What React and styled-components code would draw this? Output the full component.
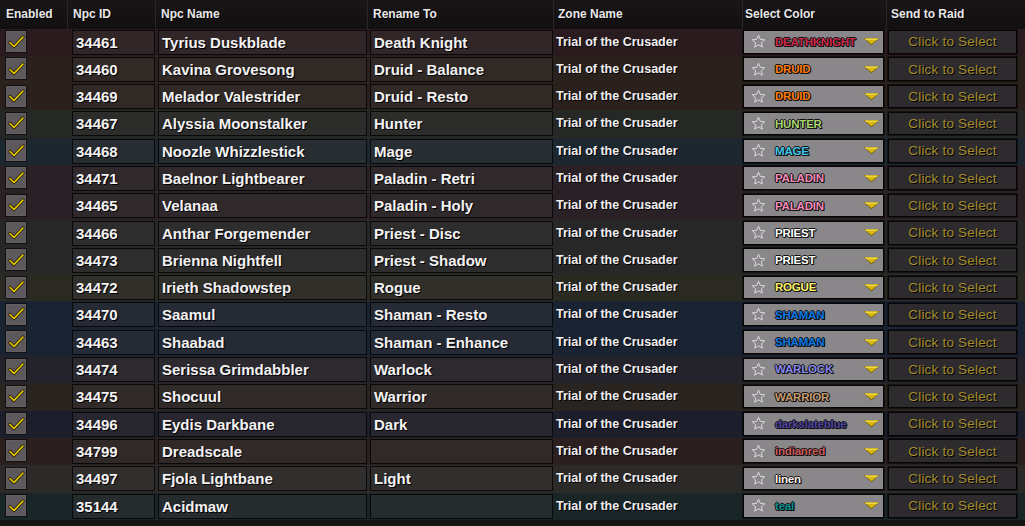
import React from "react";
import styled, { createGlobalStyle } from "styled-components";

const Global = createGlobalStyle`
  html, body { margin: 0; padding: 0; background: #161314; }
  body { font-family: "Liberation Sans", Arial, sans-serif; }
`;

const Frame = styled.div`
  width: 1025px;
  height: 526px;
  background: #161314;
  display: flex;
  flex-direction: column;
  overflow: hidden;
`;

const Header = styled.div`
  display: grid;
  grid-template-columns: 67px 88px 212px 186px 189px 144px 139px;
  height: 28.5px;
  background: linear-gradient(#1a1617, #110f10);
  flex-shrink: 0;
`;

const HeadCell = styled.div`
  display: flex;
  align-items: center;
  padding-left: ${(p) => p.$pad}px;
  border-left: ${(p) => (p.$first ? "none" : "1px solid #2a2627")};
  color: #e9e7e8;
  font-weight: 700;
  font-size: 12px;
  text-shadow: 1px 1px 0 #000;
  padding-bottom: 1px;
`;

const Body = styled.div`
  display: flex;
  flex-direction: column;
`;

const Row = styled.div`
  display: grid;
  grid-template-columns: 72px 86px 212px 183px 190px 145px 137px;
  height: 27.3px;
  background: ${(p) => p.$bg};
  align-items: start;
`;

const CheckBox = styled.div`
  margin: 1.5px 0 0 5px;
  width: 22px;
  height: 23px;
  box-sizing: border-box;
  background: #5c585b;
  border: 1px solid #121011;
  box-shadow: inset 0 0 0 1px rgba(255, 255, 255, 0.04);
  display: flex;
  align-items: center;
  justify-content: center;
`;

const Field = styled.div`
  margin-top: 1px;
  width: ${(p) => p.$w}px;
  height: 25px;
  box-sizing: border-box;
  border: 1px solid #0a0909;
  background: rgba(58, 54, 56, 0.38);
  display: flex;
  align-items: center;
  padding-left: 3px;
  color: #f4f2f3;
  font-weight: 700;
  font-size: 15px;
  text-shadow: 1px 1px 0 #000;
  white-space: nowrap;
  overflow: hidden;
`;

const Zone = styled.div`
  height: 27px;
  display: flex;
  align-items: center;
  padding-left: 3px;
  padding-bottom: 1px;
  box-sizing: border-box;
  color: #f2f0f1;
  font-weight: 700;
  font-size: 12.5px;
  text-shadow: 1px 1px 0 #000;
  white-space: nowrap;
`;

const Dropdown = styled.div`
  margin-top: 1.5px;
  width: 141px;
  height: 23.5px;
  box-sizing: border-box;
  border: 1px solid #050505;
  box-shadow: 0 0 0 0.5px #000;
  background: #8a878a;
  display: flex;
  align-items: center;
  padding-left: 7px;
  padding-right: 3px;
`;

const ColorName = styled.span`
  flex: 1;
  margin-left: 9px;
  color: ${(p) => p.$color};
  font-weight: 700;
  font-size: 11.5px;
  letter-spacing: -0.2px;
  text-shadow: -1px 0 0 #111, 1px 0 0 #111, 0 -1px 0 #111, 0 1px 0 #111,
    1px 1px 0 #000;
  white-space: nowrap;
`;

const RaidButton = styled.div`
  margin-top: 1.5px;
  width: 129px;
  height: 23.5px;
  box-sizing: border-box;
  border: 1px solid #050505;
  box-shadow: 0 0 0 0.5px #000;
  background: #2d2b2d;
  display: flex;
  align-items: center;
  justify-content: center;
  color: #a58c2f;
  font-size: 13.5px;
  letter-spacing: 0.2px;
  text-shadow: 1px 1px 0 #000;
  white-space: nowrap;
`;

const Check = () => (
  <svg width="20" height="20" viewBox="0 0 20 20">
    <polyline
      points="4,10.5 8,14.5 17,5"
      fill="none"
      stroke="#2a2100"
      strokeWidth="3.2"
      strokeLinejoin="round"
      strokeLinecap="round"
    />
    <polyline
      points="4,10.5 8,14.5 17,5"
      fill="none"
      stroke="#e9cf00"
      strokeWidth="1.6"
      strokeLinejoin="round"
      strokeLinecap="round"
    />
  </svg>
);

const Star = () => (
  <svg width="15" height="15" viewBox="0 0 24 24">
    <polygon
      points="12,2 14.9,8.6 22,9.3 16.6,14 18.2,21 12,17.3 5.8,21 7.4,14 2,9.3 9.1,8.6"
      fill="none"
      stroke="#dcdadc"
      strokeWidth="1.6"
      strokeLinejoin="round"
    />
  </svg>
);

const Arrow = () => (
  <svg width="17" height="9" viewBox="0 0 17 9">
    <polygon points="0.5,1 16.5,1 8.5,8.2" fill="#6b5800" />
    <polygon points="1.5,1.6 15.5,1.6 8.5,7.3" fill="#d9b70c" />
    <polygon points="1.5,1.6 15.5,1.6 14.2,2.8 2.8,2.8" fill="#f7e25a" />
  </svg>
);

const rows = [
  ["34461", "Tyrius Duskblade", "Death Knight", "DEATHKNIGHT", "#cf2a4c", "#2a1b1e"],
  ["34460", "Kavina Grovesong", "Druid - Balance", "DRUID", "#ff7c0a", "#2b211c"],
  ["34469", "Melador Valestrider", "Druid - Resto", "DRUID", "#ff7c0a", "#2b211c"],
  ["34467", "Alyssia Moonstalker", "Hunter", "HUNTER", "#aad372", "#252824"],
  ["34468", "Noozle Whizzlestick", "Mage", "MAGE", "#3fc7eb", "#1d2730"],
  ["34471", "Baelnor Lightbearer", "Paladin - Retri", "PALADIN", "#f48cba", "#2a2126"],
  ["34465", "Velanaa", "Paladin - Holy", "PALADIN", "#f48cba", "#2a2126"],
  ["34466", "Anthar Forgemender", "Priest - Disc", "PRIEST", "#ffffff", "#272728"],
  ["34473", "Brienna Nightfell", "Priest - Shadow", "PRIEST", "#ffffff", "#272728"],
  ["34472", "Irieth Shadowstep", "Rogue", "ROGUE", "#fff468", "#2b2a22"],
  ["34470", "Saamul", "Shaman - Resto", "SHAMAN", "#0a78e6", "#1a2332"],
  ["34463", "Shaabad", "Shaman - Enhance", "SHAMAN", "#0a78e6", "#1a2332"],
  ["34474", "Serissa Grimdabbler", "Warlock", "WARLOCK", "#8788ee", "#24222b"],
  ["34475", "Shocuul", "Warrior", "WARRIOR", "#c69b6d", "#2a2420"],
  ["34496", "Eydis Darkbane", "Dark", "darkslateblue", "#4f44a0", "#1d1e2b"],
  ["34799", "Dreadscale", "", "indianred", "#cd5c5c", "#2c1f20"],
  ["34497", "Fjola Lightbane", "Light", "linen", "#faf0e6", "#2b2a29"],
  ["35144", "Acidmaw", "", "teal", "#0a9090", "#1a2527"],
];

const headers = [
  ["Enabled", 6],
  ["Npc ID", 5],
  ["Npc Name", 5],
  ["Rename To", 5],
  ["Zone Name", 4],
  ["Select Color", 2],
  ["Send to Raid", 4],
];

export default function App() {
  return (
    <>
      <Global />
      <Frame>
        <Header>
          {headers.map(([h, pad], i) => (
            <HeadCell key={h} $pad={pad} $first={i === 0}>
              {h}
            </HeadCell>
          ))}
        </Header>
        <Body>
          {rows.map(([id, name, rename, cls, color, bg]) => (
            <Row key={id} $bg={bg}>
              <div>
                <CheckBox>
                  <Check />
                </CheckBox>
              </div>
              <Field $w={83}>{id}</Field>
              <Field $w={209}>{name}</Field>
              <Field $w={183}>{rename}</Field>
              <Zone>Trial of the Crusader</Zone>
              <Dropdown>
                <Star />
                <ColorName $color={color}>{cls}</ColorName>
                <Arrow />
              </Dropdown>
              <RaidButton>Click to Select</RaidButton>
            </Row>
          ))}
        </Body>
      </Frame>
    </>
  );
}
